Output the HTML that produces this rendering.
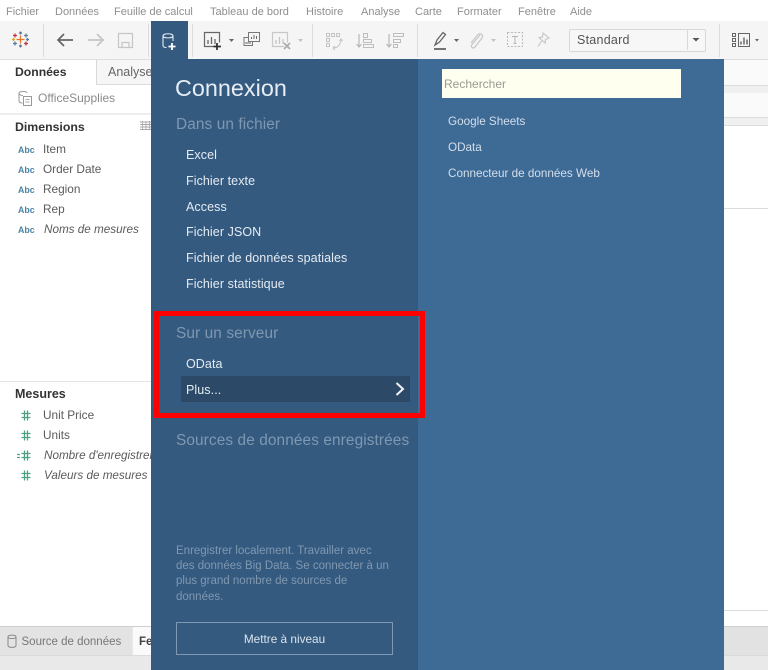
<!DOCTYPE html>
<html lang="fr"><head><meta charset="utf-8"><title>Tableau</title>
<style>
html,body{margin:0;padding:0;width:768px;height:670px;overflow:hidden;background:#fff}
body{position:relative;font-family:"Liberation Sans",sans-serif}
.t{position:absolute;white-space:nowrap;line-height:14px}
.b{position:absolute}
.m{top:5px;font-size:11px;color:#8f8f8f}
.p{color:#e4ebf2;font-size:12.5px;left:186px;letter-spacing:.08px}
.h{color:#7f98b1;font-size:15.4px;left:176px;letter-spacing:.1px}
.r{color:#d3dfea;font-size:11.7px;left:448px}
.f{font-size:11.8px;color:#5a5a5a;left:43px}
.a{font-size:8.8px;color:#4a84a4;left:18px;font-weight:bold;line-height:12px}
i.f{left:44px;font-size:11.7px}
svg{position:absolute;left:0;top:0}
</style></head><body>
<span class="t m" style="left:6px">Fichier</span>
<span class="t m" style="left:55px">Données</span>
<span class="t m" style="left:114px">Feuille de calcul</span>
<span class="t m" style="left:210px">Tableau de bord</span>
<span class="t m" style="left:306px">Histoire</span>
<span class="t m" style="left:361px">Analyse</span>
<span class="t m" style="left:415px">Carte</span>
<span class="t m" style="left:457px">Formater</span>
<span class="t m" style="left:518px">Fenêtre</span>
<span class="t m" style="left:570px">Aide</span>

<div class="b" style="left:0;top:21px;width:768px;height:38px;background:#f5f5f5"></div>
<div class="b" style="left:43px;top:24px;width:1px;height:33px;background:#dcdcdc"></div>
<div class="b" style="left:148px;top:24px;width:1px;height:33px;background:#dcdcdc"></div>
<div class="b" style="left:192px;top:24px;width:1px;height:33px;background:#dcdcdc"></div>
<div class="b" style="left:312px;top:24px;width:1px;height:33px;background:#dcdcdc"></div>
<div class="b" style="left:417px;top:24px;width:1px;height:33px;background:#dcdcdc"></div>
<div class="b" style="left:719px;top:24px;width:1px;height:33px;background:#dcdcdc"></div>

<div class="b" style="left:0;top:59px;width:768px;height:1px;background:#dedede"></div>
<div class="b" style="left:96px;top:60px;width:60px;height:24px;background:#f6f6f6;border-left:1px solid #d8d8d8"></div>
<div class="b" style="left:96px;top:84px;width:60px;height:1px;background:#dcdcdc"></div>
<span class="t" style="left:15px;top:65px;font-size:12.2px;font-weight:bold;color:#333">Données</span>
<span class="t" style="left:108px;top:65px;font-size:12.5px;color:#666">Analyse</span>
<span class="t" style="left:38px;top:91px;font-size:12px;color:#8a8a8a">OfficeSupplies</span>
<div class="b" style="left:0;top:113px;width:151px;height:2px;background:#eee"></div>

<span class="t" style="left:15px;top:120px;font-size:12.3px;font-weight:bold;color:#333">Dimensions</span>
<span class="t a" style="top:144px">Abc</span><span class="t f" style="top:142px">Item</span>
<span class="t a" style="top:164px">Abc</span><span class="t f" style="top:162px">Order Date</span>
<span class="t a" style="top:184px">Abc</span><span class="t f" style="top:182px">Region</span>
<span class="t a" style="top:204px">Abc</span><span class="t f" style="top:202px">Rep</span>
<span class="t a" style="top:224px">Abc</span><i class="t f" style="top:223px">Noms de mesures</i>

<div class="b" style="left:0;top:381px;width:151px;height:1px;background:#e4e4e4"></div>
<span class="t" style="left:15px;top:387px;font-size:12.5px;font-weight:bold;color:#333">Mesures</span>
<span class="t f" style="top:408px">Unit Price</span>
<span class="t f" style="top:428px">Units</span>
<i class="t f" style="top:449px">Nombre d'enregistrements</i>
<i class="t f" style="top:469px">Valeurs de mesures</i>

<!-- right side background -->
<div class="b" style="left:724px;top:60px;width:44px;height:25px;background:#fafafa"></div>
<div class="b" style="left:724px;top:85px;width:44px;height:7px;background:#f0f0f0;border-top:1px solid #dcdcdc;border-bottom:1px solid #dcdcdc"></div>
<div class="b" style="left:724px;top:93px;width:44px;height:24px;background:#fafafa"></div>
<div class="b" style="left:724px;top:117px;width:44px;height:7px;background:#f0f0f0;border-top:1px solid #dcdcdc;border-bottom:1px solid #dcdcdc"></div>
<div class="b" style="left:724px;top:208px;width:44px;height:1px;background:#dcdcdc"></div>
<div class="b" style="left:724px;top:610px;width:44px;height:1px;background:#dcdcdc"></div>

<!-- bottom bar -->
<div class="b" style="left:0;top:626px;width:768px;height:44px;background:#e9e9e9"></div>
<div class="b" style="left:0;top:626px;width:768px;height:1px;background:#cfcfcf"></div>
<div class="b" style="left:0;top:627px;width:132px;height:28px;background:#e3e3e3"></div>
<div class="b" style="left:724px;top:627px;width:44px;height:28px;background:#e2e2e2"></div>
<div class="b" style="left:0;top:655px;width:768px;height:1px;background:#dbdbdb"></div>
<div class="b" style="left:133px;top:627px;width:20px;height:28px;background:#fafafa"></div>
<span class="t" style="left:21.5px;top:635px;font-size:11.5px;color:#777">Source de données</span>
<span class="t" style="left:139px;top:635px;font-size:11.5px;font-weight:bold;color:#444">Fe</span>

<!-- panels -->
<div class="b" style="left:151px;top:59px;width:267px;height:611px;background:#355a80"></div>
<div class="b" style="left:151px;top:21px;width:37px;height:38px;background:#355a80"></div>
<div class="b" style="left:418px;top:59px;width:306px;height:611px;background:#3e6a96"></div>

<span class="t" style="left:175px;top:75px;font-size:23.4px;line-height:26px;color:#e6edf4">Connexion</span>
<span class="t h" style="top:118px">Dans un fichier</span>
<span class="t p" style="top:148px">Excel</span>
<span class="t p" style="top:174px">Fichier texte</span>
<span class="t p" style="top:200px">Access</span>
<span class="t p" style="top:225px">Fichier JSON</span>
<span class="t p" style="top:251px">Fichier de données spatiales</span>
<span class="t p" style="top:277px">Fichier statistique</span>
<span class="t h" style="top:327px">Sur un serveur</span>
<span class="t p" style="top:357px">OData</span>
<div class="b" style="left:181px;top:376px;width:229px;height:26px;background:#2c4a68"></div>
<span class="t p" style="top:383px">Plus...</span>
<span class="t h" style="top:434px;font-size:15.4px">Sources de données enregistrées</span>
<span class="t" style="left:176px;top:543.500px;font-size:11.5px;line-height:15.4px;color:#7f98b1;white-space:normal;width:225px">Enregistrer localement. Travailler avec<br>des données Big Data. Se connecter à un<br>plus grand nombre de sources de<br>données.</span>
<div class="b" style="left:176px;top:622px;width:215px;height:31px;border:1px solid #7f98b1;color:#d9e3ec;font-size:11.8px;line-height:33px;text-align:center">Mettre à niveau</div>

<div class="b" style="left:442px;top:69px;width:239px;height:29px;background:#fffff0"></div>
<span class="t" style="left:444px;top:77px;font-size:12px;color:#9a9a90">Rechercher</span>
<span class="t r" style="top:115px">Google Sheets</span>
<span class="t r" style="top:141px">OData</span>
<span class="t r" style="top:167px">Connecteur de données Web</span>

<!-- red box -->
<div class="b" style="left:154px;top:311px;width:261px;height:97px;border:5px solid #f00"></div>

<!-- combo -->
<div class="b" style="left:569px;top:29px;width:135px;height:21px;background:#f7f7f7;border:1px solid #d8d8d8;border-radius:2px"></div>
<div class="b" style="left:687px;top:30px;width:1px;height:20px;background:#d8d8d8"></div>
<span class="t" style="left:577px;top:33px;font-size:12.5px;color:#555;letter-spacing:.25px">Standard</span>

<svg width="768" height="670" viewBox="0 0 768 670" fill="none">
<!-- logo -->
<g stroke-width="1.300">
<path d="M20.500 35.500v8M16.500 39.500h8" stroke="#e8762c"/>
<path d="M20.500 31.500v3M19 33h3" stroke="#5b6f8e"/>
<path d="M20.500 44.500v3M19 46h3" stroke="#5b6f8e"/>
<path d="M15 33.500v4M13 35.500h4" stroke="#c7304a"/>
<path d="M26 33.500v4M24 35.500h4" stroke="#59879b"/>
<path d="M15 41.500v4M13 43.500h4" stroke="#4f7ea8"/>
<path d="M26 41.500v4M24 43.500h4" stroke="#c7304a"/>
<path d="M13.500 38v3M12 39.500h3" stroke="#e3a51f"/>
<path d="M27.500 38v3M26 39.500h3" stroke="#4f7ea8"/>
</g>
<!-- arrows -->
<path d="M73 40H58M64 34l-6 6 6 6" stroke="#666" stroke-width="1.700"/>
<path d="M88 40h15M97 34l6 6-6 6" stroke="#c4c4c4" stroke-width="1.700"/>
<!-- save -->
<path d="M118.500 33.500h14v14h-14zM122 47.500v-5h7v5" stroke="#c6c6c6" stroke-width="1.200"/>
<!-- connect icon -->
<path d="M163 36c0-3 10-3 10 0v5M163 36c0 2.500 10 2.500 10 0M163 36v9.500c0 1.500 2 2 3.500 2" stroke="#e4ebf2" stroke-width="1.100"/>
<path d="M172 43v7M168.500 46.500h7" stroke="#fff" stroke-width="1.800"/>
<!-- new worksheet -->
<path d="M215 46.500h-10.500v-14h15v10" stroke="#666" stroke-width="1.200"/>
<path d="M208 44v-4M211.500 44v-7M215 44v-5" stroke="#666" stroke-width="1.300"/>
<path d="M217 43v7M213.500 46.500h7.500" stroke="#333" stroke-width="1.800"/>
<path d="M229 39l2.500 3 2.500-3z" fill="#666"/>
<!-- dashboard -->
<path d="M248 37.500h-4v8h8.500v-3.500" stroke="#777"/>
<path d="M248.500 32.500h11v9h-11z" stroke="#777"/>
<path d="M251.500 39v-2M254 39v-4M256.500 39v-3M246 44v-2M248 44v-2M250 44v-2" stroke="#666" stroke-width="1"/>
<!-- del worksheet -->
<path d="M284 46.500h-11.500v-14h15v10" stroke="#c8c8c8" stroke-width="1.200"/>
<path d="M276 44v-4M279.500 44v-7M283 44v-5" stroke="#c4c4c4" stroke-width="1.300"/>
<path d="M284 43l6 6M290 43l-6 6" stroke="#aaa" stroke-width="1.600"/>
<path d="M298 39l2.500 3 2.500-3z" fill="#c4c4c4"/>
<!-- swap -->
<path d="M326.500 33.500h3v3h-3zM331.500 33.500h3v3h-3zM336.500 33.500h3v3h-3zM326.500 38.500h3v3h-3zM326.500 43.500h3v3h-3z" stroke="#c4c4c4"/>
<path d="M341 39c0 5-3 9-8 9M339.500 41l1.500-2 1.500 2M335 46l-2 2 2 2" stroke="#c4c4c4"/>
<!-- sort -->
<path d="M359 34v13M356.500 44l2.500 3 2.500-3" stroke="#b8b8b8" stroke-width="1.200"/>
<path d="M363.500 33.500h4v4h-4zM363.500 39.500h8v3h-8zM363.500 44.500h10v3h-10z" stroke="#bdbdbd"/>
<path d="M389 34v13M386.500 44l2.500 3 2.500-3" stroke="#b8b8b8" stroke-width="1.200"/>
<path d="M393.500 33.500h10v3h-10zM393.500 39.500h7v3h-7zM393.500 44.500h4v3h-4z" stroke="#bdbdbd"/>
<!-- highlighter -->
<path d="M435 45l2-5 6-7.500 2.500 2-6 7.500z" stroke="#666" stroke-width="1.300"/>
<path d="M434 49h12" stroke="#555" stroke-width="1.600"/>
<path d="M454 39l2.500 3 2.500-3z" fill="#666"/>
<!-- clip -->
<path d="M480 35l-8 9.500c-2 2.500 1 4.500 3 2.500l7-9c2-3-2-6-4.500-3l-6.500 8" stroke="#c8c8c8" stroke-width="1.300"/>
<path d="M491 39l2.500 3 2.500-3z" fill="#c4c4c4"/>
<!-- text -->
<rect x="507.500" y="32.500" width="15" height="14" stroke="#bbb" stroke-dasharray="2 1.500"/>
<path d="M512 36.500h6M515 36.500v7M513.500 43.500h3" stroke="#b5b5b5"/>
<!-- pin -->
<path d="M543 33l6 5-3.500 1.500-.5 3.500-6-5.500 3.500-.5zM541.500 41l-3.500 5.500" stroke="#c4c4c4" stroke-width="1.100"/>
<!-- combo arrow -->
<path d="M692.500 38h7l-3.500 3.500z" fill="#555"/>
<!-- show me -->
<path d="M732.500 33.500h3v3h-3zM732.500 38.500h3v3h-3zM732.500 43.500h3v3h-3zM738.500 33.500h11v13h-11z" stroke="#666"/>
<path d="M741 44.500v-3M744 44.500v-7M747 44.500v-5" stroke="#555" stroke-width="1.300"/>
<path d="M755 39l2 2.500 2-2.500z" fill="#666"/>
<!-- datasource icon -->
<path d="M19 93c0-2 8-2 8 0M19 93c0 2 2.500 2.500 4 2.500M19 93v8c0 1.500 2 2 3.500 2" stroke="#999"/>
<path d="M23.500 96.500h8v9h-8z" stroke="#999"/>
<path d="M25.500 99.500h4M25.500 102h4" stroke="#aaa"/>
<!-- grid icon -->
<path d="M140 122h11M140 124.500h11M140 127h11M140 129.500h11M142.500 121v9M146 121v9M149.500 121v9" stroke="#aaa" stroke-width=".9"/>
<!-- measure hash icons -->
<g stroke="#4f9f82" stroke-width="1.300">
<path d="M24.500 410.500v10M27.500 410.500v10M21.500 413.500h9M21.500 417.500h9"/>
<path d="M24.500 430.500v10M27.500 430.500v10M21.500 433.500h9M21.500 437.500h9"/>
<path d="M24.500 450.500v10M27.500 450.500v10M21.500 453.500h9M21.500 457.500h9M17 454.500h3M17 457.500h3"/>
<path d="M24.500 470.500v10M27.500 470.500v10M21.500 473.500h9M21.500 477.500h9"/>
</g>
<!-- bottom db -->
<path d="M8 637c0-2.500 8-2.500 8 0v8.500c0 2.500-8 2.500-8 0zM8 637c0 2 8 2 8 0" stroke="#888"/>
<!-- chevron -->
<path d="M396.500 383l6.500 6-6.500 6" stroke="#f0f4f8" stroke-width="2"/>
</svg>
</body></html>
